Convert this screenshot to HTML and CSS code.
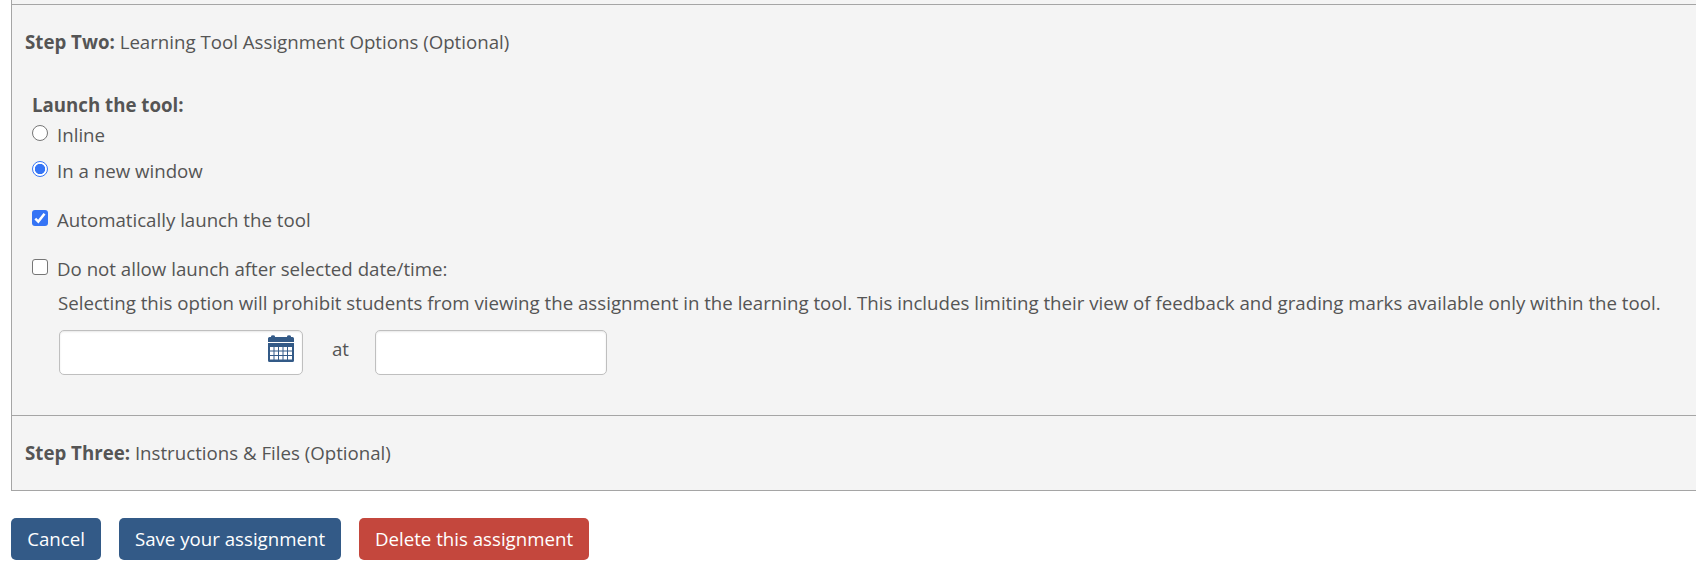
FILE: index.html
```html
<!DOCTYPE html>
<html lang="en">
  <head>
    <meta charset="UTF-8" />
    <meta name="viewport" content="width=device-width, initial-scale=1.0" />
    <title>Assignment</title>
    <link rel="stylesheet" href="styles.css">
  </head>
  <body>
    <form class="assignment">
      <div class="steps">
        <div class="step step-two">
          <div class="step-title"><b>Step Two:</b> Learning Tool Assignment Options (Optional)</div>
          <div class="options">
            <div class="options-title">Launch the tool:</div>
            <label class="option"><input type="radio" name="launch"><span>Inline</span></label>
            <label class="option new-window"><input type="radio" name="launch" checked><span>In a new window</span></label>
            <label class="option auto-launch"><input type="checkbox" checked><span>Automatically launch the tool</span></label>
            <label class="option no-launch"><input type="checkbox"><span>Do not allow launch after selected date/time:</span></label>
            <div class="hint">Selecting this option will prohibit students from viewing the assignment in the learning tool. This includes limiting their view of feedback and grading marks available only within the tool.</div>
            <div class="datetime">
              <div class="field date">
                <input type="text" aria-label="Date">
                <svg class="calendar" width="26" height="27" viewBox="0 0 26 27">
                  <path fill="#335a87" d="M0 7V3.500Q0 2 1.500 2H3V1.500Q3 .3 5 .3T7 1.500V2H19V1.500Q19 .3 21 .3T23 1.500V2H24.500Q26 2 26 3.500V7ZM0 8H26V25.500Q26 27 24.500 27H1.500Q0 27 0 25.500Z"/>
                  <path fill="#fff" d="M2 12h3.500v3.500h-3.500zM6.500 12h3.500v3.500h-3.500zM11 12h3.500v3.500h-3.500zM15.500 12h3.500v3.500h-3.500zM20 12h4v3.500h-4zM2 16.500h3.500v3.500h-3.500zM6.500 16.500h3.500v3.500h-3.500zM11 16.500h3.500v3.500h-3.500zM15.500 16.500h3.500v3.500h-3.500zM20 16.500h4v3.500h-4zM2 21h3.500v3.500h-3.500zM6.500 21h3.500v3.500h-3.500zM11 21h3.500v3.500h-3.500zM15.500 21h3.500v3.500h-3.500zM20 21h4v3.500h-4z"/>
                </svg>
              </div>
              <span class="at">at</span>
              <div class="field time"><input type="text" aria-label="Time"></div>
            </div>
          </div>
        </div>
        <div class="step step-three">
          <div class="step-title"><b>Step Three:</b> Instructions &amp; Files (Optional)</div>
        </div>
      </div>
      <div class="buttons">
        <button type="button" class="btn cancel">Cancel</button>
        <button type="button" class="btn save">Save your assignment</button>
        <button type="button" class="btn delete">Delete this assignment</button>
      </div>
    </form>
  </body>
</html>
```
FILE: styles.css
```css
* {
  box-sizing: border-box;
}
body {
  margin: 0;
  background-color: white;
  color: #555;
  font-family: "Open Sans", sans-serif;
  font-size: 18.68px;
  line-height: 24px;
  overflow: hidden;
}
.assignment {
  padding-left: 11px;
}
.steps {
  padding-top: 4px;
  background-color: #f4f4f4;
  border-left: 1px solid #a5a5a5;
  border-bottom: 1px solid #a5a5a5;
}
.step {
  border-top: 1px solid #a5a5a5;
  padding: 25px 0 0 13px;
}
.step-two {
  height: 411px;
}
.step-three {
  height: 75px;
}
.options {
  padding: 39px 0 0 7px;
}
.options-title {
  font-weight: bold;
}
.option {
  display: flex;
  margin-top: 6px;
}
.option input {
  appearance: none;
  width: 16px;
  height: 16px;
  margin: 2px 9px 0 0;
  border: 1px solid #767676;
  border-radius: 3px;
  background-color: white;
}
.option input[type="radio"] {
  margin-top: 1.5px;
  border-radius: 50%;
}
.option input[type="radio"]:checked {
  border-color: #3574f5;
  background: radial-gradient(circle, #3574f5 4.8px, white 5.5px);
}
.option input[type="checkbox"]:checked {
  border: none;
  background: #3574f5 url("data:image/svg+xml,%3Csvg xmlns='http://www.w3.org/2000/svg' viewBox='0 0 16 16'%3E%3Cpath d='M3.300 8.700L6.300 11.600L12.500 3.700' fill='none' stroke='white' stroke-width='2.500'/%3E%3C/svg%3E");
}
.new-window {
  margin-top: 12px;
}
.auto-launch,
.no-launch {
  margin-top: 25px;
}
.hint {
  margin: 10px 0 15px 26px;
  white-space: nowrap;
}
.datetime {
  display: flex;
  margin-left: 27px;
}
.field {
  position: relative;
  height: 45px;
}
.field input {
  width: 100%;
  height: 100%;
  border: 1px solid #bfbfbf;
  border-radius: 5px;
  background-color: white;
  box-shadow: inset 0 1px 2px #e8e8e8;
}
.date {
  width: 244px;
}
.time {
  width: 232px;
}
.calendar {
  position: absolute;
  top: 5px;
  right: 9.5px;
}
.at {
  width: 72px;
  padding: 7px 0 0 3px;
  text-align: center;
}
.buttons {
  display: flex;
  gap: 18px;
  margin-top: 27px;
}
.btn {
  height: 42px;
  padding: 0;
  border: none;
  border-radius: 5px;
  background-color: #335a87;
  color: white;
  font: inherit;
}
.cancel {
  width: 90px;
}
.save {
  width: 222px;
}
.delete {
  width: 230px;
  background-color: #c4473d;
}
```
